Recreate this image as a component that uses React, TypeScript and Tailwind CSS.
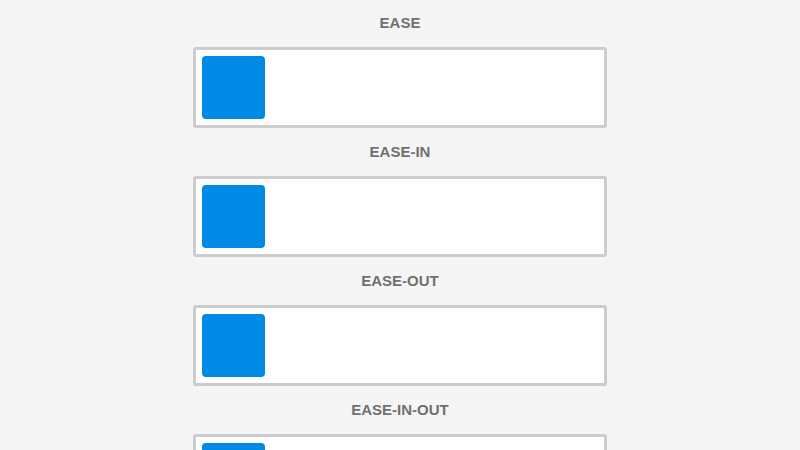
export default function App() {
  const items = ['ease', 'ease-in', 'ease-out', 'ease-in-out']

  return (
    <div className="min-h-screen bg-[#f5f5f5] font-['Liberation_Sans',Arial,sans-serif] flex flex-col items-center overflow-hidden h-[450px]">
      {items.map((name) => (
        <section key={name} className="flex flex-col items-center mb-px">
          <h3 className="pt-[15px] pb-[16px] text-[15px] leading-[16px] font-bold uppercase text-[#707070]">
            {name}
          </h3>
          <div className="w-[414px] h-[81px] bg-white border-[3px] border-[#cccccc] rounded-[3px] p-[6px]">
            <div className="w-[63px] h-[63px] bg-[#008ae6] rounded-[4px]" />
          </div>
        </section>
      ))}
    </div>
  )
}
